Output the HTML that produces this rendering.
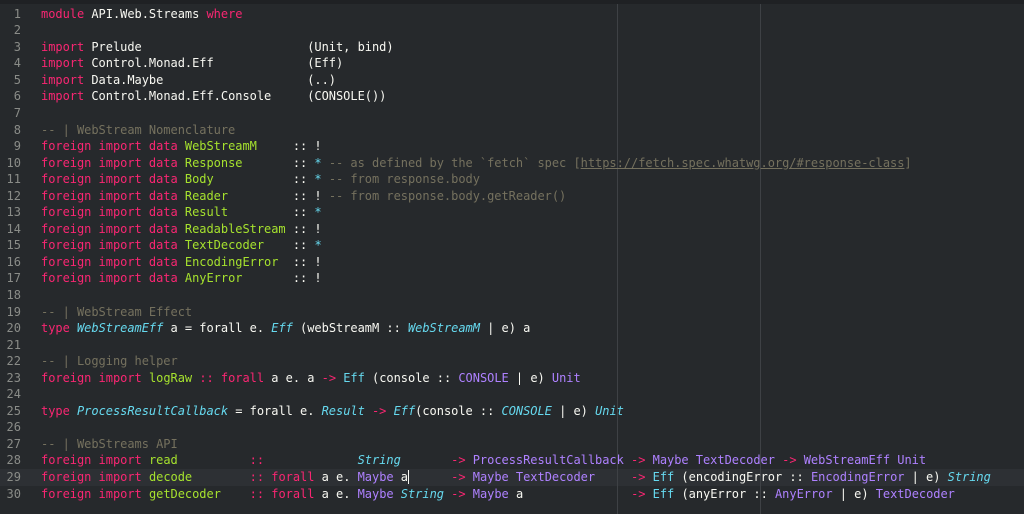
<!DOCTYPE html>
<html><head><meta charset="utf-8"><style>
html,body{margin:0;padding:0;background:#26292c;width:1024px;height:514px;overflow:hidden}
body{position:relative;font-family:"DejaVu Sans Mono","Liberation Mono",monospace;font-size:12px;color:#f8f8f2}
.top{position:absolute;left:0;top:0;width:1024px;height:4px;background:#1f2124}
.ruler{position:absolute;top:4px;bottom:0;width:1px;background:#3e4145}
.gut{position:absolute;left:0;top:5.7px;width:21px;text-align:right;color:#8a8c88;line-height:16.55px;white-space:pre}
.code{position:absolute;left:41px;top:5.7px;line-height:16.55px;white-space:pre;letter-spacing:-0.03px}
.hl{position:absolute;left:0;width:1024px;height:16.55px;background:#2d3034}
.k{color:#f92672}.g{color:#a6e22e}.c{color:#66d9ef}.i{color:#66d9ef;font-style:italic}.p{color:#ae81ff}.cm{color:#75715e}
.u{text-decoration:underline}
.cur{display:inline-block;width:1px;height:14px;background:#f8f8f2;vertical-align:-3px;margin-right:-1px}
</style></head><body>
<div class="top"></div>
<div class="hl" style="top:469.1px"></div>
<div class="ruler" style="left:617px"></div>
<div class="ruler" style="left:760px"></div>
<div class="gut">1
2
3
4
5
6
7
8
9
10
11
12
13
14
15
16
17
18
19
20
21
22
23
24
25
26
27
28
29
30</div>
<div class="code"><span class="k">module</span> API.Web.Streams <span class="k">where</span>

<span class="k">import</span> Prelude                       (Unit, bind)
<span class="k">import</span> Control.Monad.Eff             (Eff)
<span class="k">import</span> Data.Maybe                    (..)
<span class="k">import</span> Control.Monad.Eff.Console     (CONSOLE())

<span class="cm">-- | WebStream Nomenclature</span>
<span class="k">foreign import data</span> <span class="g">WebStreamM</span>     :: !
<span class="k">foreign import data</span> <span class="g">Response</span>       :: <span class="c">*</span> <span class="cm">-- as defined by the `fetch` spec [<span class="u">https://fetch.spec.whatwg.org/#response-class</span>]</span>
<span class="k">foreign import data</span> <span class="g">Body</span>           :: <span class="c">*</span> <span class="cm">-- from response.body</span>
<span class="k">foreign import data</span> <span class="g">Reader</span>         :: ! <span class="cm">-- from response.body.getReader()</span>
<span class="k">foreign import data</span> <span class="g">Result</span>         :: <span class="c">*</span>
<span class="k">foreign import data</span> <span class="g">ReadableStream</span> :: !
<span class="k">foreign import data</span> <span class="g">TextDecoder</span>    :: <span class="c">*</span>
<span class="k">foreign import data</span> <span class="g">EncodingError</span>  :: !
<span class="k">foreign import data</span> <span class="g">AnyError</span>       :: !

<span class="cm">-- | WebStream Effect</span>
<span class="k">type</span> <span class="i">WebStreamEff</span> a = forall e. <span class="i">Eff</span> (webStreamM :: <span class="i">WebStreamM</span> | e) a

<span class="cm">-- | Logging helper</span>
<span class="k">foreign import</span> <span class="g">logRaw</span> <span class="k">::</span> <span class="k">forall</span> a e. a <span class="k">-&gt;</span> <span class="c">Eff</span> (console :: <span class="p">CONSOLE</span> | e) <span class="p">Unit</span>

<span class="k">type</span> <span class="i">ProcessResultCallback</span> = forall e. <span class="i">Result</span> <span class="k">-&gt;</span> <span class="i">Eff</span>(console :: <span class="i">CONSOLE</span> | e) <span class="i">Unit</span>

<span class="cm">-- | WebStreams API</span>
<span class="k">foreign import</span> <span class="g">read</span>          <span class="k">::</span>             <span class="i">String</span>       <span class="k">-&gt;</span> <span class="p">ProcessResultCallback</span> <span class="k">-&gt;</span> <span class="p">Maybe TextDecoder</span> <span class="k">-&gt;</span> <span class="p">WebStreamEff Unit</span>
<span class="k">foreign import</span> <span class="g">decode</span>        <span class="k">::</span> <span class="k">forall</span> a e. <span class="p">Maybe</span> a<span class="cur"></span>      <span class="k">-&gt;</span> <span class="p">Maybe TextDecoder</span>     <span class="k">-&gt;</span> <span class="c">Eff</span> (encodingError :: <span class="p">EncodingError</span> | e) <span class="i">String</span>
<span class="k">foreign import</span> <span class="g">getDecoder</span>    <span class="k">::</span> <span class="k">forall</span> a e. <span class="p">Maybe</span> <span class="i">String</span> <span class="k">-&gt;</span> <span class="p">Maybe</span> a               <span class="k">-&gt;</span> <span class="c">Eff</span> (anyError :: <span class="p">AnyError</span> | e) <span class="p">TextDecoder</span></div>
</body></html>
